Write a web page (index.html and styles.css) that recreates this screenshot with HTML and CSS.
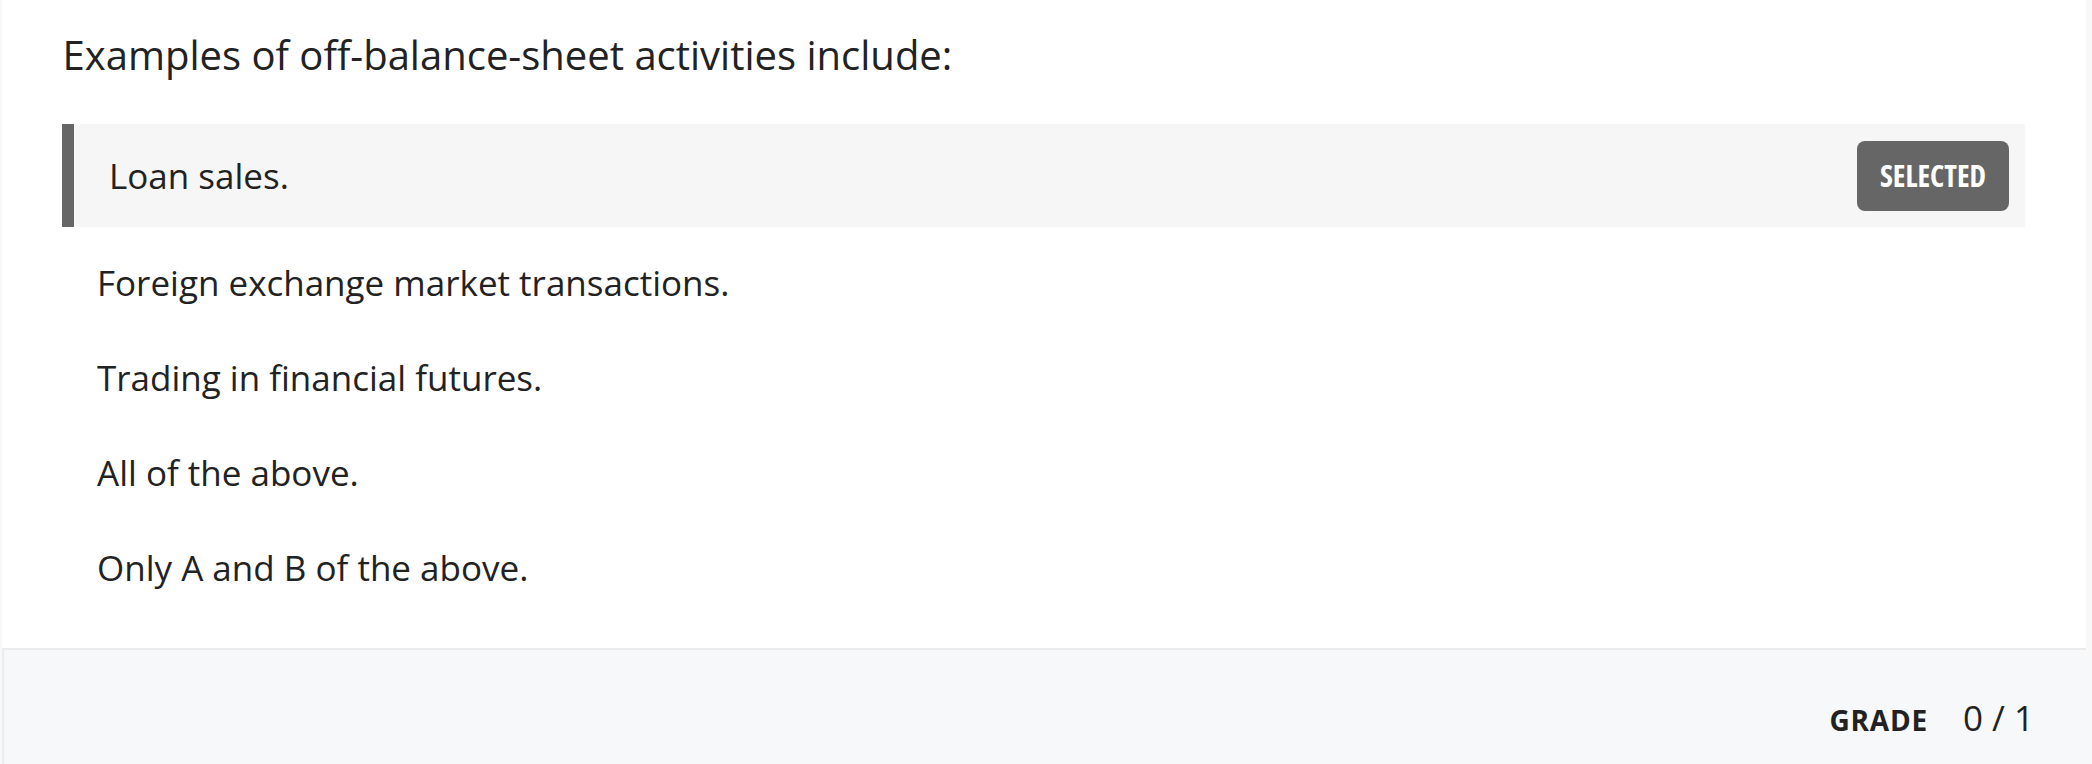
FILE: index.html
```html
<!DOCTYPE html>
<html lang="en">
<head>
<meta charset="utf-8">
<title>Question</title>
<link rel="stylesheet" href="styles.css">
</head>
<body>
<div class="card">
  <div class="question">
    <h2 class="prompt">Examples of off-balance-sheet activities include:</h2>
    <ul class="choices">
      <li class="choice choice--selected">
        <span class="choice-text">Loan sales.</span>
        <span class="badge">SELECTED</span>
      </li>
      <li class="choice"><span class="choice-text">Foreign exchange market transactions.</span></li>
      <li class="choice"><span class="choice-text">Trading in financial futures.</span></li>
      <li class="choice"><span class="choice-text">All of the above.</span></li>
      <li class="choice"><span class="choice-text">Only A and B of the above.</span></li>
    </ul>
  </div>
  <div class="footer">
    <span class="grade-label">GRADE</span>
    <span class="grade-value">0 / 1</span>
  </div>
</div>
</body>
</html>
```

FILE: styles.css
```css
html, body {
  margin: 0;
  padding: 0;
}

body {
  background: #f8f8f8;
  font-family: "Open Sans", "Noto Sans", "Liberation Sans", sans-serif;
  color: #222222;
  min-height: 764px;
}

.card {
  margin: 0 6px 0 2px;
  background: #ffffff;
  min-height: 764px;
  display: flex;
  flex-direction: column;
}

.question {
  padding: 24.5px 61px 33px 59.5px;
}

.prompt {
  margin: 0 0 39.5px 1px;
  font-size: 40px;
  line-height: 60px;
  font-weight: 400;
  color: #222222;
}

.choices {
  list-style: none;
  margin: 0;
  padding: 0;
}

.choice {
  display: flex;
  align-items: center;
  padding: 21.5px 16px 21.5px 35.5px;
  font-size: 35px;
  line-height: 52px;
  color: #222222;
}

.choice--selected {
  justify-content: space-between;
  background: #f6f6f6;
  border-left: 12px solid #666666;
  padding-top: 16.5px;
  padding-bottom: 16.5px;
  margin-bottom: 8px;
}

.badge {
  display: inline-block;
  height: 70px;
  line-height: 70px;
  padding: 0 23px;
  border-radius: 8px;
  background: #666666;
  color: #ffffff;
  font-size: 29.5px;
  font-weight: 700;
  font-stretch: 75%;
  letter-spacing: 0;
}

.footer {
  flex: 1;
  display: flex;
  justify-content: flex-end;
  align-items: baseline;
  padding: 42px 52px 40px 0;
  background: #f7f8fa;
  border-top: 2px solid #ebebeb;
  border-left: 2px solid #ececec;
}

.grade-label {
  font-size: 28px;
  font-weight: 700;
  letter-spacing: 0.8px;
  color: #222222;
}

.grade-value {
  margin-left: 35px;
  font-size: 35px;
  line-height: 52px;
  color: #222222;
}
```
